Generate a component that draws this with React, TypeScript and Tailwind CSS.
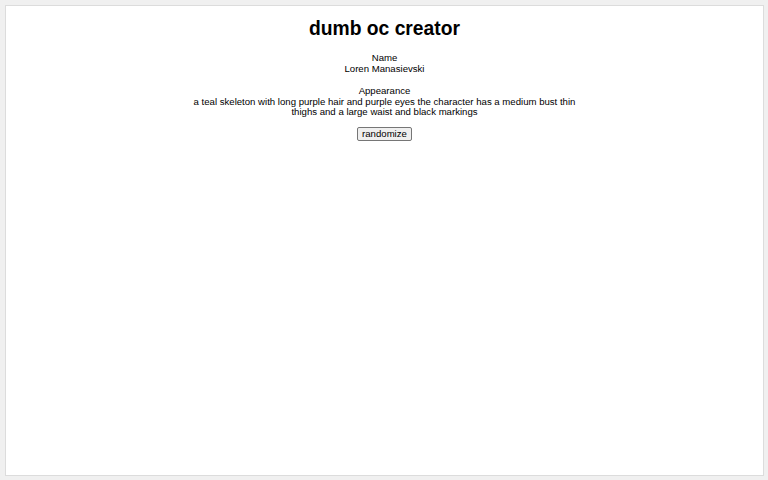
import { useState } from 'react';

const NAMES = ['Loren Manasievski', 'Mira Okonkwo', 'Dax Velloran', 'Ysolde Crane'];

export default function App() {
  const [name] = useState(NAMES[0]);

  return (
    <div className="h-[480px] w-[768px] bg-[#f0f0f0] p-[5px] font-['Liberation_Sans',Arial,sans-serif] text-black">
      <div className="h-[471px] w-[759px] border border-[#dcdcdc] bg-white">
        <div className="flex flex-col items-center pt-[11px] text-center">
          <h1 className="text-[19.3px] font-bold leading-[24px]">dumb oc creator</h1>
          <div className="mt-[11px] text-[9.6px] leading-[11px]">
            <p>Name</p>
            <p>{name}</p>
          </div>
          <div className="mt-[12px] w-[392px] text-[9.6px] leading-[10.5px]">
            <p>Appearance</p>
            <p>
              a teal skeleton with long purple hair and purple eyes the character has a medium bust thin thighs
              and a large waist and black markings
            </p>
          </div>
          <button className="mt-[9px] rounded-[2px] border border-[#767676] bg-[#efefef] px-[4px] text-[9.6px] leading-[12px]">
            randomize
          </button>
        </div>
      </div>
    </div>
  );
}
